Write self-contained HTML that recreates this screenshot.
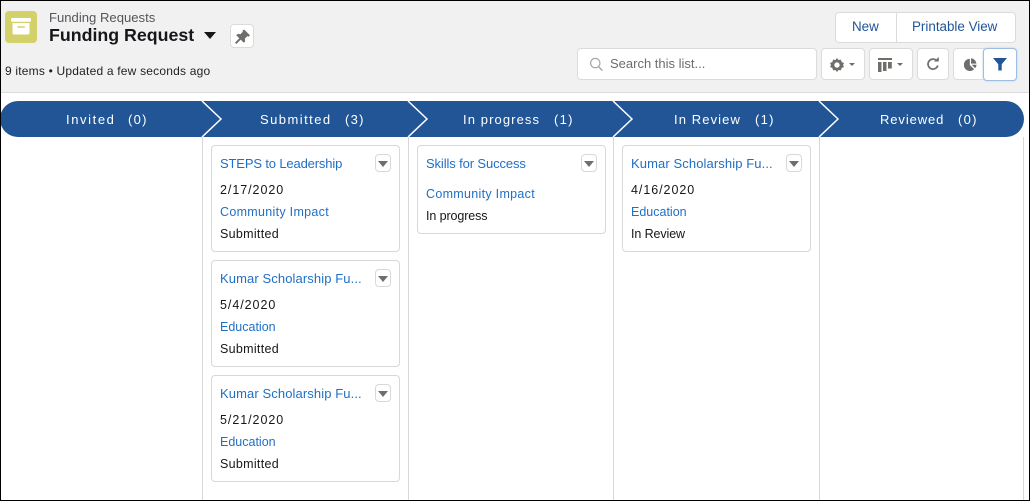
<!DOCTYPE html>
<html><head><meta charset="utf-8"><style>
*{box-sizing:border-box}
html,body{margin:0;padding:0;background:#fff}
body{width:1030px;height:501px;position:relative;overflow:hidden;font-family:"Liberation Sans",sans-serif;color:#16171a}
.a{position:absolute;white-space:nowrap}
.btn{position:absolute;background:#fff;border:1px solid #dddbda;border-radius:4px}
.card{position:absolute;width:189px;background:#fff;border:1px solid #d8d8d8;border-radius:4px}
.t{position:absolute;left:8px;top:10px;font-size:13px;line-height:16px;color:#1f6fc6;white-space:nowrap}
.l{position:absolute;left:8px;font-size:12.5px;line-height:16px;white-space:nowrap}
.b{color:#1f6fc6}
.m{position:absolute;left:163px;top:8px;width:16px;height:18px;border:1px solid #d8d8d8;border-radius:4px;background:#fff}
.m:after{content:"";position:absolute;left:2px;top:6px;border-left:5px solid transparent;border-right:5px solid transparent;border-top:6px solid #706e6b}
.h{position:absolute;top:111px;color:#fff;font-size:13px;line-height:18px;white-space:pre}
.col{position:absolute;top:137px;width:1px;height:364px;background:#d8d8d8}
</style></head><body>
<div class="a" style="left:0;top:0;width:1030px;height:93px;background:#f1f1f1;border-bottom:1px solid #dcdcdc"></div>

<svg class="a" style="left:5px;top:11px" width="32" height="32" viewBox="0 0 32 32">
<rect width="32" height="32" rx="4" fill="#d3d169"/>
<rect x="6" y="7" width="20" height="3.800" rx="1" fill="#fff"/>
<path d="M7.500 12h17v10a1.500 1.500 0 0 1-1.500 1.500H9A1.500 1.500 0 0 1 7.500 22z" fill="#fff"/>
<rect x="12.300" y="15.200" width="7.700" height="1.600" rx=".8" fill="#d3d169"/>
</svg>
<div class="a" style="left:49px;top:10px;font-size:13.100px;line-height:16px;color:#54565a">Funding Requests</div>
<div class="a" style="left:49px;top:24px;font-size:17.800px;line-height:22px;font-weight:bold;color:#16171a">Funding Request</div>
<div class="a" style="left:204px;top:32px;border-left:6.500px solid transparent;border-right:6.500px solid transparent;border-top:7px solid #16171a"></div>
<div class="btn" style="left:230px;top:24px;width:24px;height:24px">
<svg class="a" style="left:4px;top:4px" width="15" height="15" viewBox="0 0 14 14"><path d="M8.500.5L14 6l-1.500 1.200-1-.5L9.200 9l.3 2.500-1.300 1.300-2.900-2.900-4 4.100L0 12.700l4-4.100-2.800-2.700 1.300-1.300 2.500.3 2.300-2.300-.3-1z" fill="#706e6b"/></svg>
</div>
<div class="a" style="left:5px;top:63px;font-size:12px;line-height:16px;letter-spacing:.2px;color:#1f2023">9 items • Updated a few seconds ago</div>

<div class="btn" style="left:835px;top:12px;width:181px;height:31px"></div>
<div class="a" style="left:896px;top:13px;width:1px;height:29px;background:#dddbda"></div>
<div class="a" style="left:852px;top:18px;font-size:13.400px;line-height:18px;color:#1f5596">New</div>
<div class="a" style="left:912px;top:18px;font-size:13.400px;line-height:18px;color:#1f5596">Printable View</div>

<div class="btn" style="left:577px;top:48px;width:240px;height:32px"></div>
<svg class="a" style="left:589px;top:57px" width="15" height="15" viewBox="0 0 15 16"><circle cx="6.200" cy="6.500" r="5" fill="none" stroke="#a8a6a3" stroke-width="1.300"/><path d="M10 10.500l3.800 4" stroke="#a8a6a3" stroke-width="1.500"/></svg>
<div class="a" style="left:610px;top:55px;font-size:13px;line-height:18px;color:#6b6d70">Search this list...</div>

<div class="btn" style="left:821px;top:48px;width:44px;height:32px"></div>
<svg class="a" style="left:830px;top:58px" width="14" height="14" viewBox="0 0 14 14"><path fill-rule="evenodd" d="M7 0l1.500 2 2.400-.4.700 2.400L14 5l-1 2 1 2-2.400 1-.7 2.400-2.400-.4L7 14l-1.500-2-2.400.4L2.400 10 0 9l1-2-1-2 2.400-1 .7-2.400 2.400.4zM7 4.300a2.700 2.700 0 1 0 0 5.400 2.700 2.700 0 0 0 0-5.400z" fill="#706e6b"/></svg>
<div class="a" style="left:849px;top:63px;border-left:3px solid transparent;border-right:3px solid transparent;border-top:3px solid #706e6b"></div>

<div class="btn" style="left:869px;top:48px;width:44px;height:32px"></div>
<svg class="a" style="left:878px;top:58px" width="14" height="14" viewBox="0 0 14 14"><rect x="0" y="0" width="14" height="2" fill="#706e6b"/><rect x="0" y="4" width="3.500" height="10" fill="#706e6b"/><rect x="5" y="4" width="3.500" height="9" fill="#706e6b"/><rect x="10" y="4" width="3.800" height="6.500" fill="#706e6b"/></svg>
<div class="a" style="left:897px;top:63px;border-left:3px solid transparent;border-right:3px solid transparent;border-top:3px solid #706e6b"></div>

<div class="btn" style="left:917px;top:48px;width:32px;height:32px"></div>
<svg class="a" style="left:926px;top:57px" width="14" height="14" viewBox="0 0 14 14"><path d="M10.500 3.500A5 5 0 1 0 11.800 8.500" fill="none" stroke="#706e6b" stroke-width="1.700"/><path d="M7.800 4.500h5V0z" fill="#706e6b"/></svg>

<div class="btn" style="left:953px;top:48px;width:34px;height:32px"></div>
<svg class="a" style="left:964px;top:58px" width="13" height="13" viewBox="0 0 14 14"><path d="M6.300.8v6.900l4.700 4.400A6.600 6.600 0 1 1 6.300.8z" fill="#706e6b"/><path d="M7.600.3a6.300 6.300 0 0 1 5.800 5.700H7.600z" fill="#706e6b"/><path d="M8.200 7.300h5.400a6.300 6.300 0 0 1-1.600 3.700z" fill="#706e6b"/></svg>
<div class="a" style="left:983px;top:48px;width:34px;height:33px;background:#fff;border:1px solid #9dbde2;border-radius:4px;box-shadow:0 0 2px #b6cfe9"></div>
<svg class="a" style="left:993px;top:58px" width="14" height="13" viewBox="0 0 14 13"><path d="M0 0H14L8.700 6.300V12.500H5.300V6.300Z" fill="#215595"/></svg>

<div class="col" style="left:202px"></div>
<div class="col" style="left:408px"></div>
<div class="col" style="left:613px"></div>
<div class="col" style="left:819px"></div>
<div class="col" style="left:1023px"></div>

<svg class="a" style="left:0;top:101px" width="1030" height="36" viewBox="0 0 1030 36">
<path d="M18 0H1006a18 18 0 0 1 0 36H18a18 18 0 0 1 0-36z" fill="#215595"/>
<path d="M202 0l19 18-19 18M408 0l19 18-19 18M613 0l19 18-19 18M819 0l19 18-19 18" fill="none" stroke="#fff" stroke-width="1.500"/>
</svg>
<div class="h" style="left:66px;letter-spacing:1.6px">Invited</div><div class="h" style="left:128px;letter-spacing:1.3px">(0)</div>
<div class="h" style="left:260px;letter-spacing:1.45px">Submitted</div><div class="h" style="left:345px;letter-spacing:1.3px">(3)</div>
<div class="h" style="left:463px;letter-spacing:1.1px">In progress</div><div class="h" style="left:554px;letter-spacing:1.3px">(1)</div>
<div class="h" style="left:674px;letter-spacing:1.1px">In Review</div><div class="h" style="left:755px;letter-spacing:1.3px">(1)</div>
<div class="h" style="left:880px;letter-spacing:.9px">Reviewed</div><div class="h" style="left:958px;letter-spacing:1.3px">(0)</div>

<div class="card" style="left:211px;top:145px;height:107px"><div class="t" style="letter-spacing:-.15px">STEPS to Leadership</div><div class="m"></div><div class="l" style="top:36px;letter-spacing:.95px">2/17/2020</div><div class="l b" style="top:58px;letter-spacing:.3px">Community Impact</div><div class="l" style="top:80px;letter-spacing:.3px">Submitted</div></div>
<div class="card" style="left:211px;top:260px;height:107px"><div class="t" style="letter-spacing:.1px">Kumar Scholarship Fu...</div><div class="m"></div><div class="l" style="top:36px;letter-spacing:.95px">5/4/2020</div><div class="l b" style="top:58px">Education</div><div class="l" style="top:80px;letter-spacing:.3px">Submitted</div></div>
<div class="card" style="left:211px;top:375px;height:107px"><div class="t" style="letter-spacing:.1px">Kumar Scholarship Fu...</div><div class="m"></div><div class="l" style="top:36px;letter-spacing:.95px">5/21/2020</div><div class="l b" style="top:58px">Education</div><div class="l" style="top:80px;letter-spacing:.3px">Submitted</div></div>
<div class="card" style="left:417px;top:145px;height:89px"><div class="t" style="letter-spacing:-.12px">Skills for Success</div><div class="m"></div><div class="l b" style="top:40px;letter-spacing:.3px">Community Impact</div><div class="l" style="top:62px;letter-spacing:-.1px">In progress</div></div>
<div class="card" style="left:622px;top:145px;height:107px"><div class="t" style="letter-spacing:.1px">Kumar Scholarship Fu...</div><div class="m"></div><div class="l" style="top:36px;letter-spacing:.95px">4/16/2020</div><div class="l b" style="top:58px">Education</div><div class="l" style="top:80px;letter-spacing:-.1px">In Review</div></div>

<div class="a" style="left:0;top:0;width:1030px;height:501px;border:1px solid #000"></div>
</body></html>
